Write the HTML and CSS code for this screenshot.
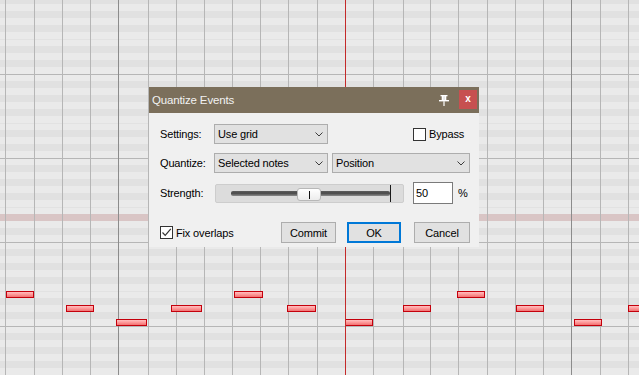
FILE: index.html
```html
<!DOCTYPE html>
<html lang="en">
<head>
  <meta charset="UTF-8">
  <meta name="viewport" content="width=device-width, initial-scale=1.0">
  <title>Quantize Events</title>
  <link rel="stylesheet" href="styles.css">
</head>
<body>
  <div class="roll">
    <svg class="roll-canvas" width="639" height="375" viewBox="0 0 639 375">
      <defs>
        <linearGradient id="noteFill" x1="0" y1="0" x2="0" y2="1">
          <stop offset="0" stop-color="#ffc6c6"/>
          <stop offset="0.45" stop-color="#ff9c9c"/>
          <stop offset="1" stop-color="#ee6a6a"/>
        </linearGradient>
      </defs>
      <!-- selected key row -->
      <rect class="key-hl" x="0" y="214" width="639" height="7"/>
      <!-- beats -->
      <g class="beat" shape-rendering="crispEdges">
        <rect x="5" y="0" width="1" height="375"/>
        <rect x="34" y="0" width="1" height="375"/>
        <rect x="62" y="0" width="1" height="375"/>
        <rect x="90" y="0" width="1" height="375"/>
        <rect x="148" y="0" width="1" height="375"/>
        <rect x="176" y="0" width="1" height="375"/>
        <rect x="204" y="0" width="1" height="375"/>
        <rect x="232" y="0" width="1" height="375"/>
        <rect x="260" y="0" width="1" height="375"/>
        <rect x="288" y="0" width="1" height="375"/>
        <rect x="317" y="0" width="1" height="375"/>
        <rect x="373" y="0" width="1" height="375"/>
        <rect x="403" y="0" width="1" height="375"/>
        <rect x="430" y="0" width="1" height="375"/>
        <rect x="458" y="0" width="1" height="375"/>
        <rect x="487" y="0" width="1" height="375"/>
        <rect x="515" y="0" width="1" height="375"/>
        <rect x="543" y="0" width="1" height="375"/>
        <rect x="600" y="0" width="1" height="375"/>
        <rect x="628" y="0" width="1" height="375"/>
      </g>
      <!-- bars -->
      <g class="bar" shape-rendering="crispEdges">
        <rect x="118" y="0" width="1" height="375"/>
        <rect x="345" y="0" width="1" height="375"/>
        <rect x="571" y="0" width="1" height="375"/>
      </g>
      <!-- notes -->
      <g class="notes">
        <rect x="6.5" y="291.5" width="27" height="6"/>
        <rect x="66.5" y="305.5" width="27" height="6"/>
        <rect x="116.5" y="319.5" width="30" height="6"/>
        <rect x="171.5" y="305.5" width="30" height="6"/>
        <rect x="234.5" y="291.5" width="28" height="6"/>
        <rect x="287.5" y="305.5" width="28" height="6"/>
        <rect x="345.5" y="319.5" width="27" height="6"/>
        <rect x="403.5" y="305.5" width="27" height="6"/>
        <rect x="457.5" y="291.5" width="27" height="6"/>
        <rect x="516.5" y="305.5" width="27" height="6"/>
        <rect x="574.5" y="319.5" width="27" height="6"/>
        <rect x="628.5" y="305.5" width="20" height="6"/>
      </g>
      <rect class="playhead" x="345" y="0" width="1" height="375" shape-rendering="crispEdges"/>
    </svg>

    <div class="dialog">
      <div class="titlebar">
        <span class="title">Quantize Events</span>
        <svg class="pin" width="10" height="11" viewBox="0 0 10 11">
          <rect x="1.5" y="0" width="7" height="1.3" fill="#fff"/>
          <rect x="2.7" y="1" width="4.6" height="4.2" fill="#fff"/>
          <rect x="4.6" y="1.3" width="0.9" height="3.6" fill="#cfcfcf"/>
          <rect x="0" y="5" width="10" height="1.4" fill="#fff"/>
          <rect x="4.4" y="6.2" width="1.2" height="4.8" fill="#fff"/>
        </svg>
        <button class="close">x</button>
      </div>

      <div class="dialog-body">
        <div class="row">
          <span class="lbl">Settings:</span>
          <div class="combo combo-short">
            <span>Use grid</span>
            <svg class="chev" width="8" height="5" viewBox="0 0 8 5"><polyline points="0.5,0.5 4,4 7.5,0.5"/></svg>
          </div>
          <label class="check bypass"><span class="box"></span>Bypass</label>
        </div>

        <div class="row">
          <span class="lbl">Quantize:</span>
          <div class="combo combo-short">
            <span>Selected notes</span>
            <svg class="chev" width="8" height="5" viewBox="0 0 8 5"><polyline points="0.5,0.5 4,4 7.5,0.5"/></svg>
          </div>
          <div class="combo combo-long">
            <span>Position</span>
            <svg class="chev" width="8" height="5" viewBox="0 0 8 5"><polyline points="0.5,0.5 4,4 7.5,0.5"/></svg>
          </div>
        </div>

        <div class="row row-strength">
          <span class="lbl">Strength:</span>
          <div class="slider">
            <div class="groove"></div>
            <div class="thumb"></div>
            <div class="stop"></div>
          </div>
          <div class="num">50</div>
          <span class="pct">%</span>
        </div>

        <div class="row row-actions">
          <label class="check">
            <span class="box">
              <svg width="11" height="11" viewBox="0 0 11 11"><polyline points="1.5,5.5 4.2,8.3 9.8,1.8"/></svg>
            </span>Fix overlaps
          </label>
          <button class="btn commit">Commit</button>
          <button class="btn ok">OK</button>
          <button class="btn cancel">Cancel</button>
        </div>
      </div>
    </div>
  </div>
</body>
</html>
```

FILE: styles.css
```css
body {
  margin: 0;
  padding: 0;
  font-family: 'Liberation Sans', Arial, sans-serif;
  font-size: 11px;
  letter-spacing: -0.15px;
  color: #000;
  overflow: hidden;
}

/* piano roll */
.roll {
  position: relative;
  width: 639px;
  height: 375px;
  overflow: hidden;
  background-color: #eaeaea;
  background-image: linear-gradient(to bottom,
    #b6b6b6 0 1px,
    #eaeaea 1px 7px,
    #e1e1e1 7px 14px,
    #eaeaea 14px 21px,
    #e1e1e1 21px 28px,
    #eaeaea 28px 35px,
    #e1e1e1 35px 42px,
    #eaeaea 42px 49px,
    #e2e2e2 49px 50px,
    #eaeaea 50px 56px,
    #e1e1e1 56px 63px,
    #eaeaea 63px 70px,
    #e1e1e1 70px 77px,
    #eaeaea 77px 84px);
  background-size: 100% 84px;
  background-position: 0 74px;
}
.roll-canvas {
  display: block;
}
.key-hl {
  fill: #d9c5c5;
}
.beat rect {
  fill: #b6b6b6;
}
.bar rect {
  fill: #8c8c8c;
}
.notes rect {
  fill: url(#noteFill);
  stroke: #c4000c;
  stroke-width: 1;
}
.playhead {
  fill: #c42a2a;
}

/* dialog */
.dialog {
  position: absolute;
  left: 149px;
  top: 87px;
  width: 330px;
  height: 160px;
  background: #f0f0f0;
  display: flex;
  flex-direction: column;
}
.titlebar {
  height: 26px;
  background: #7b6f5b;
  display: flex;
  align-items: center;
  padding-left: 3px;
  padding-right: 2px;
}
.title {
  flex: 1;
  color: #f2f2f2;
  font-size: 11.5px;
}
.pin {
  margin-right: 10px;
  margin-top: 1px;
}
.close {
  width: 18px;
  height: 19px;
  margin-bottom: 1px;
  border: none;
  padding: 0 0 2px;
  background: #c75050;
  color: #fff;
  font-family: 'Liberation Sans', Arial, sans-serif;
  font-size: 10px;
  font-weight: bold;
}

.dialog-body {
  padding: 11px 9px 0 11px;
}
.row {
  display: flex;
  align-items: center;
  height: 20px;
  margin-bottom: 9px;
}
.lbl {
  width: 54px;
}
.combo {
  box-sizing: border-box;
  height: 20px;
  background: #e1e1e1;
  border: 1px solid #adadad;
  display: flex;
  align-items: center;
  justify-content: space-between;
  padding: 0 4px 0 3px;
}
.combo-short {
  width: 114px;
}
.combo-long {
  width: 138px;
  margin-left: 4px;
}
.chev polyline {
  fill: none;
  stroke: #3c3c3c;
  stroke-width: 1;
}

.check {
  display: flex;
  align-items: center;
}
.box {
  box-sizing: border-box;
  width: 13px;
  height: 13px;
  border: 1px solid #333;
  background: #fff;
  margin-right: 3px;
  display: flex;
  align-items: center;
  justify-content: center;
}
.box polyline {
  fill: none;
  stroke: #333;
  stroke-width: 1.2;
}
.bypass {
  margin-left: 85px;
}

.row-strength {
  height: 22px;
  margin-bottom: 18px;
}
.slider {
  position: relative;
  box-sizing: border-box;
  width: 189px;
  height: 19px;
  margin-left: 1px;
  background: #dcdcdc;
  border: 1px solid #cdcdcd;
  border-radius: 2px;
}
.groove {
  margin: 6px 0 0 15px;
  width: 159px;
  height: 5px;
  border-radius: 2px;
  background: linear-gradient(to bottom, #5e5e5e, #4a4a4a 45%, #8c8c8c);
}
.thumb {
  position: absolute;
  left: 81px;
  top: 3px;
  box-sizing: border-box;
  width: 24px;
  height: 13px;
  border: 1px solid #b8b8b8;
  border-radius: 3px;
  background: linear-gradient(to bottom, #ffffff, #ececec);
}
.thumb::after {
  content: '';
  position: absolute;
  left: 11px;
  top: 2px;
  width: 1px;
  height: 8px;
  background: #111;
}
.stop {
  position: absolute;
  left: 174px;
  top: 0;
  width: 1px;
  height: 17px;
  background: #1a1a1a;
}
.num {
  box-sizing: border-box;
  width: 40px;
  height: 22px;
  margin-left: 9px;
  padding-left: 2px;
  background: #fff;
  border: 1px solid #7a7a7a;
  display: flex;
  align-items: center;
}
.pct {
  margin-left: 5px;
}

.row-actions {
  height: 21px;
  margin-bottom: 0;
}
.btn {
  box-sizing: border-box;
  height: 21px;
  padding: 0;
  background: #e1e1e1;
  border: 1px solid #adadad;
  font-family: 'Liberation Sans', Arial, sans-serif;
  font-size: 11px;
  letter-spacing: -0.15px;
  color: #000;
}
.commit {
  width: 55px;
  margin-left: auto;
}
.ok {
  width: 54px;
  margin-left: 11px;
  border: 2px solid #0078d7;
}
.cancel {
  width: 56px;
  margin-left: 13px;
}
```
